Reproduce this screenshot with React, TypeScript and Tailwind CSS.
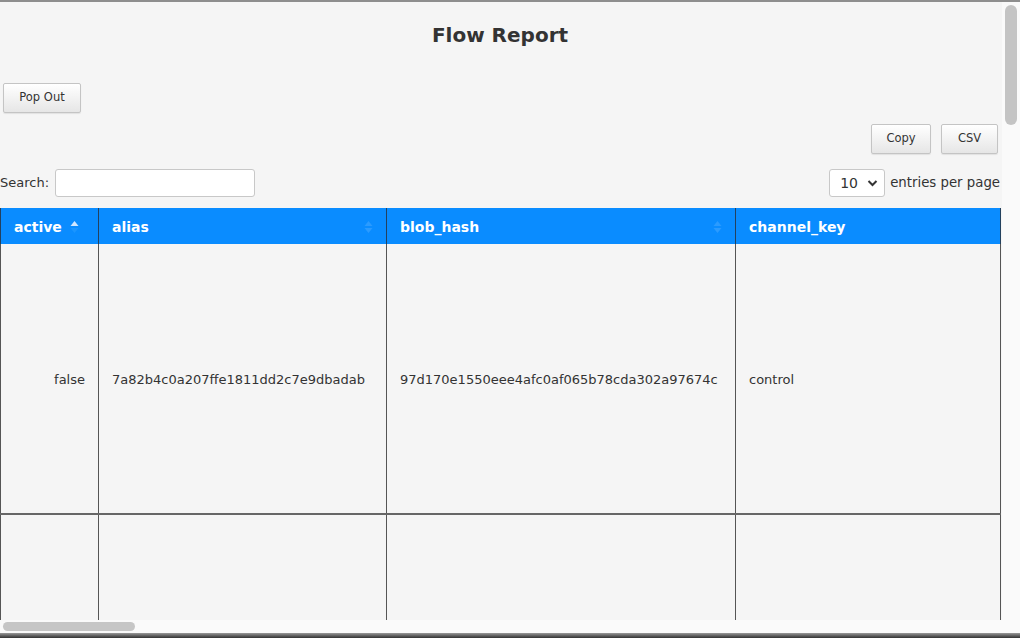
import React from 'react';

const font = "font-['DejaVu_Sans','Verdana',sans-serif]";

function SortIcon({ active }: { active?: boolean }) {
  return (
    <svg width="9" height="16" viewBox="0 0 9 16" className="shrink-0">
      <path d="M4.5 2 L8.5 7 L0.5 7 Z" fill={active ? '#cfe6ff' : '#2b9bff'} />
      <path d="M4.5 14 L8.5 9 L0.5 9 Z" fill={active ? '#1a95ff' : '#2b9bff'} />
    </svg>
  );
}

const columns = [
  { key: 'active', w: 'w-[98px]', sorted: true },
  { key: 'alias', w: 'w-[288px]' },
  { key: 'blob_hash', w: 'w-[349px]' },
  { key: 'channel_key', w: 'w-[265px]', noIcon: true },
];

const row = ['false', '7a82b4c0a207ffe1811dd2c7e9dbadab', '97d170e1550eee4afc0af065b78cda302a97674c', 'control'];

function Btn({ children, className }: { children: React.ReactNode; className: string }) {
  return (
    <button
      className={`h-[30px] rounded-[2px] border border-[#c4c4c4] bg-gradient-to-b from-white to-[#e6e6e6] text-[11.5px] text-[#333] shadow-[0_1px_1px_rgba(0,0,0,0.08)] ${className}`}
    >
      {children}
    </button>
  );
}

export default function App() {
  return (
    <div className={`flex h-[638px] w-[1020px] flex-col overflow-hidden bg-[#f5f5f5] text-[#333] ${font}`}>
      <div className="h-[2px] bg-[#8e8e8e]" />
      <div className="flex min-h-0 flex-1">
        <div className="flex min-w-0 flex-1 flex-col">
          <div className="min-h-0 flex-1 overflow-hidden">
            <div className="w-[1002px] pr-[2px]">
              <h2 className="pt-[21px] text-center text-[20px] font-bold leading-6 text-[#333]">Flow Report</h2>

              <div className="mt-[36px] pl-[3px]">
                <Btn className="w-[78px] h-[29px]">Pop Out</Btn>
              </div>

              <div className="mt-[11px] flex justify-end gap-[10px] pr-[2px]">
                <Btn className="w-[60px]">Copy</Btn>
                <Btn className="w-[57px]">CSV</Btn>
              </div>

              <div className="mt-[15px] flex h-[28px] items-center justify-between">
                <label className="flex items-center text-[13px] text-[#333]">
                  Search:
                  <input className="ml-[6px] h-[28px] w-[200px] rounded-[3px] border border-[#c8c8c8] bg-white" />
                </label>
                <div className="flex items-center text-[13.3px] whitespace-nowrap">
                  <div className="mr-[5px] flex h-[28px] w-[56px] items-center justify-between rounded-[3px] border border-[#c8c8c8] bg-white pl-[10px] pr-[6px] text-[14px]">
                    <span>10</span>
                    <svg width="11" height="8" viewBox="0 0 11 8">
                      <path d="M1.5 2 L5.5 6 L9.5 2" stroke="#333" strokeWidth="2" fill="none" />
                    </svg>
                  </div>
                  entries per page
                </div>
              </div>

              <table className="mt-[11px] w-[1000px] table-fixed border-collapse text-[13px]">
                <thead>
                  <tr className="h-[36px] bg-[#0a8cff] text-white">
                    {columns.map((c) => (
                      <th
                        key={c.key}
                        className={`${c.w} border-x border-[#23415e] px-[13px] pt-[2px] text-left text-[14px] font-bold`}
                      >
                        <div className="flex items-center justify-between">
                          <span className={c.sorted ? 'flex items-center gap-[8px]' : ''}>
                            {c.key}
                            {c.sorted && <SortIcon active />}
                          </span>
                          {!c.sorted && !c.noIcon && <SortIcon />}
                        </div>
                      </th>
                    ))}
                  </tr>
                </thead>
                <tbody>
                  <tr className="h-[270px]">
                    {row.map((v, i) => (
                      <td
                        key={i}
                        className={`border-x border-b-2 border-x-[#555] border-b-[#666] px-[13px] pt-[3px] align-middle whitespace-nowrap text-[#333] ${i === 0 ? 'text-right' : 'text-left'}`}
                      >
                        {v}
                      </td>
                    ))}
                  </tr>
                  <tr className="h-[200px]">
                    {row.map((_, i) => (
                      <td key={i} className="border-x border-x-[#555]" />
                    ))}
                  </tr>
                </tbody>
              </table>
            </div>
          </div>
          <div className="flex h-[13px] items-center bg-[#fafafa] pl-[3px]">
            <div className="h-[9px] w-[132px] rounded-full bg-[#c6c6c6]" />
          </div>
        </div>
        <div className="flex w-[18px] justify-center bg-[#fafafa] pt-[3px]">
          <div className="h-[120px] w-[12px] rounded-full bg-[#c4c4c4]" />
        </div>
      </div>
      <div className="h-[5px] bg-gradient-to-b from-[#9a9a9a] to-[#333]" />
    </div>
  );
}
